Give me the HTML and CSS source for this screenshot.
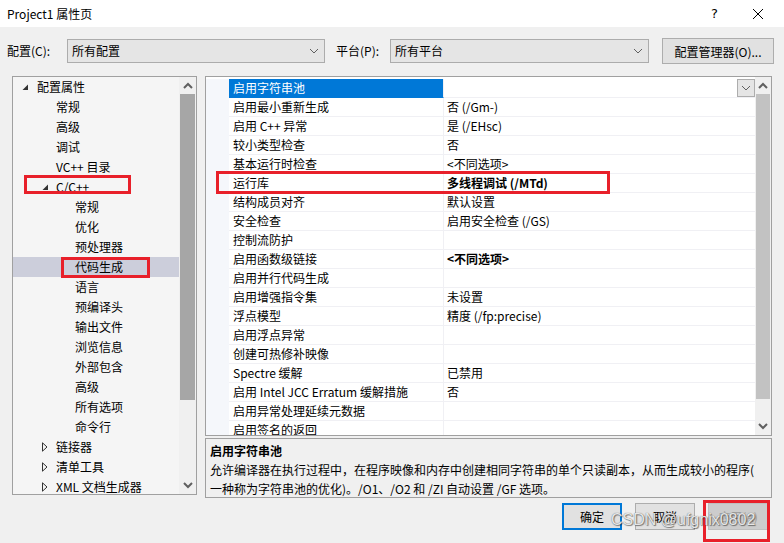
FILE: index.html
```html
<!DOCTYPE html>
<html lang="zh-CN">
<head>
<meta charset="utf-8">
<title>Project1 属性页</title>
<link rel="stylesheet" href="styles.css">
</head>
<body>
<div class="dialog">
  <div class="titlebar">
    <span class="title">Project1 属性页</span>
    <span class="help">?</span>
    <svg class="close" width="12" height="12" viewBox="0 0 12 12"><path d="M1 1 L11 11 M11 1 L1 11" stroke="#000" stroke-width="1" fill="none"/></svg>
  </div>

  <div class="toolbar">
    <span class="lbl lbl1">配置(C):</span>
    <div class="combo c1"><span>所有配置</span><svg width="10" height="6" viewBox="0 0 10 6"><path d="M1 1 L5 5 L9 1" stroke="#606060" fill="none"/></svg></div>
    <span class="lbl lbl2">平台(P):</span>
    <div class="combo c2"><span>所有平台</span><svg width="10" height="6" viewBox="0 0 10 6"><path d="M1 1 L5 5 L9 1" stroke="#606060" fill="none"/></svg></div>
    <div class="btn mgr">配置管理器(O)...</div>
  </div>

  <div class="main">
    <div class="tree">
      <div class="tree-list">
        <div class="node l0"><span class="tg"><svg width="7" height="7" viewBox="0 0 7 7"><path d="M6 0.5 L6 6 L0.5 6 Z" fill="#333"/></svg></span>配置属性</div>
        <div class="node l1">常规</div>
        <div class="node l1">高级</div>
        <div class="node l1">调试</div>
        <div class="node l1">VC++ 目录</div>
        <div class="node l1t"><span class="tg"><svg width="7" height="7" viewBox="0 0 7 7"><path d="M6 0.5 L6 6 L0.5 6 Z" fill="#333"/></svg></span>C/C++</div>
        <div class="node l2">常规</div>
        <div class="node l2">优化</div>
        <div class="node l2">预处理器</div>
        <div class="node l2 sel">代码生成</div>
        <div class="node l2">语言</div>
        <div class="node l2">预编译头</div>
        <div class="node l2">输出文件</div>
        <div class="node l2">浏览信息</div>
        <div class="node l2">外部包含</div>
        <div class="node l2">高级</div>
        <div class="node l2">所有选项</div>
        <div class="node l2">命令行</div>
        <div class="node l1t"><span class="tg"><svg width="6" height="10" viewBox="0 0 6 10"><path d="M0.5 0.8 L5 5 L0.5 9.2 Z" fill="none" stroke="#333"/></svg></span>链接器</div>
        <div class="node l1t"><span class="tg"><svg width="6" height="10" viewBox="0 0 6 10"><path d="M0.5 0.8 L5 5 L0.5 9.2 Z" fill="none" stroke="#333"/></svg></span>清单工具</div>
        <div class="node l1t"><span class="tg"><svg width="6" height="10" viewBox="0 0 6 10"><path d="M0.5 0.8 L5 5 L0.5 9.2 Z" fill="none" stroke="#333"/></svg></span>XML 文档生成器</div>
      </div>
      <div class="vscroll dark">
        <div class="arr"><svg width="10" height="7" viewBox="0 0 10 7"><path d="M1 6 L5 2 L9 6" stroke="#606060" stroke-width="2" fill="none"/></svg></div>
        <div class="thumb"></div>
        <div class="track"></div>
        <div class="arr"><svg width="10" height="7" viewBox="0 0 10 7"><path d="M1 1 L5 5 L9 1" stroke="#606060" stroke-width="2" fill="none"/></svg></div>
      </div>
    </div>

    <div class="right">
      <div class="grid">
        <div class="rows">
          <div class="row"><div class="gut"></div><div class="name selcell">启用字符串池</div><div class="val"><span></span><span class="ddbtn"><svg width="10" height="6" viewBox="0 0 10 6"><path d="M1 1 L5 5 L9 1" stroke="#606060" fill="none"/></svg></span></div></div>
          <div class="row"><div class="gut"></div><div class="name">启用最小重新生成</div><div class="val">否 (/Gm-)</div></div>
          <div class="row"><div class="gut"></div><div class="name">启用 C++ 异常</div><div class="val">是 (/EHsc)</div></div>
          <div class="row"><div class="gut"></div><div class="name">较小类型检查</div><div class="val">否</div></div>
          <div class="row"><div class="gut"></div><div class="name">基本运行时检查</div><div class="val">&lt;不同选项&gt;</div></div>
          <div class="row"><div class="gut"></div><div class="name">运行库</div><div class="val b">多线程调试 (/MTd)</div></div>
          <div class="row"><div class="gut"></div><div class="name">结构成员对齐</div><div class="val">默认设置</div></div>
          <div class="row"><div class="gut"></div><div class="name">安全检查</div><div class="val">启用安全检查 (/GS)</div></div>
          <div class="row"><div class="gut"></div><div class="name">控制流防护</div><div class="val"></div></div>
          <div class="row"><div class="gut"></div><div class="name">启用函数级链接</div><div class="val b">&lt;不同选项&gt;</div></div>
          <div class="row"><div class="gut"></div><div class="name">启用并行代码生成</div><div class="val"></div></div>
          <div class="row"><div class="gut"></div><div class="name">启用增强指令集</div><div class="val">未设置</div></div>
          <div class="row"><div class="gut"></div><div class="name">浮点模型</div><div class="val">精度 (/fp:precise)</div></div>
          <div class="row"><div class="gut"></div><div class="name">启用浮点异常</div><div class="val"></div></div>
          <div class="row"><div class="gut"></div><div class="name">创建可热修补映像</div><div class="val"></div></div>
          <div class="row"><div class="gut"></div><div class="name">Spectre 缓解</div><div class="val">已禁用</div></div>
          <div class="row"><div class="gut"></div><div class="name">启用 Intel JCC Erratum 缓解措施</div><div class="val">否</div></div>
          <div class="row"><div class="gut"></div><div class="name">启用异常处理延续元数据</div><div class="val"></div></div>
          <div class="row"><div class="gut"></div><div class="name">启用签名的返回</div><div class="val"></div></div>
        </div>
        <div class="vscroll light">
          <div class="arr"><svg width="10" height="7" viewBox="0 0 10 7"><path d="M1 6 L5 2 L9 6" stroke="#606060" stroke-width="2" fill="none"/></svg></div>
          <div class="thumb"></div>
          <div class="track"></div>
          <div class="arr"><svg width="10" height="7" viewBox="0 0 10 7"><path d="M1 1 L5 5 L9 1" stroke="#606060" stroke-width="2" fill="none"/></svg></div>
        </div>
      </div>
      <div class="desc">
        <div class="desc-title">启用字符串池</div>
        <div class="desc-line">允许编译器在执行过程中，在程序映像和内存中创建相同字符串的单个只读副本，从而生成较小的程序(</div>
        <div class="desc-line">一种称为字符串池的优化)。/O1、/O2 和 /ZI 自动设置 /GF 选项。</div>
      </div>
    </div>
  </div>

  <div class="footer">
    <div class="btn fbtn ok">确定</div>
    <div class="btn fbtn">取消</div>
    <div class="btn fbtn dis">应用(A)</div>
  </div>

  <div class="mark m-cpp"></div>
  <div class="mark m-gen"></div>
  <div class="mark m-rt"></div>
  <div class="mark m-apply"></div>
  <div class="watermark">CSDN @ufgnix0802</div>
</div>
</body>
</html>
```

FILE: styles.css
```css
* { box-sizing: border-box; }
html, body { margin: 0; padding: 0; }
body {
  width: 784px;
  height: 543px;
  overflow: hidden;
  background: #f0f0f0;
  font-family: "Noto Sans CJK SC", "Noto Sans", sans-serif;
  font-size: 12px;
  color: #000;
}
.dialog { position: relative; width: 784px; height: 543px; }

.titlebar {
  height: 27px;
  background: #fff;
  display: flex;
  align-items: center;
  padding-left: 7px;
}
.title { flex: 1; font-size: 12px; }
.help { width: 12px; margin-right: 29px; font-family: "DejaVu Sans", sans-serif; font-size: 13px; }
.close { margin-right: 20px; }

.toolbar {
  height: 49px;
  display: flex;
  align-items: flex-start;
  padding: 12px 10px 0 7px;
}
.lbl { line-height: 24px; }
.lbl1 { width: 60px; }
.lbl2 { width: 54px; margin-left: 11px; }
.combo {
  height: 24px;
  background: #e5e5e5;
  border: 1px solid #acacac;
  display: flex;
  align-items: center;
  justify-content: space-between;
  padding: 0 5px 0 4px;
}
.combo span { line-height: 22px; }
.c1 { width: 258px; }
.c2 { width: 259px; }
.btn {
  background: #e1e1e1;
  border: 1px solid #adadad;
  display: flex;
  align-items: center;
  justify-content: center;
}
.mgr { width: 112px; height: 26px; margin-left: 13px; margin-top: -1px; }

.main {
  display: flex;
  padding-left: 12px;
  gap: 8px;
  height: 421px;
}

.tree {
  width: 185px;
  height: 419px;
  border: 1px solid #a0a0a0;
  background: #f5f5f5;
  display: flex;
}
.tree-list { width: 166px; overflow: hidden; }
.node {
  height: 20px;
  line-height: 20px;
  white-space: nowrap;
  display: flex;
  align-items: center;
}
.tg { width: 16px; display: flex; align-items: center; padding-left: 1px; }
.l0 { padding-left: 8px; }
.l1 { padding-left: 43px; }
.l1t { padding-left: 27px; }
.l1t .tg { padding-left: 2px; }
.l2 { padding-left: 62px; }
.sel { background: #cccedb; }

.vscroll {
  width: 17px;
  display: flex;
  flex-direction: column;
  background: #f0f0f0;
}
.vscroll .arr { height: 17px; display: flex; align-items: center; justify-content: center; }
.vscroll .thumb { height: 306px; margin: 0 1px; }
.vscroll .track { flex: 1; }
.dark .thumb { background: #a6a6a6; }
.light .thumb { background: #c2c2c2; height: 305px; }

.right { width: 567px; display: flex; flex-direction: column; gap: 1px; }

.grid {
  height: 360px;
  border: 1px solid #a0a0a0;
  background: #fff;
  display: flex;
}
.rows { width: 549px; padding-top: 2px; overflow: hidden; }
.row {
  display: flex;
  height: 19px;
}
.gut { width: 23px; background: #f5f7fb; }
.name {
  width: 215px;
  padding-left: 4px;
  line-height: 18px;
  border-bottom: 1px solid #f0f0f4;
  border-right: 1px solid #f0f0f4;
  white-space: nowrap;
}
.selcell { background: #0078d7; color: #fff; border-bottom-color: #0078d7; }
.val {
  flex: 1;
  padding-left: 3px;
  line-height: 18px;
  border-bottom: 1px solid #f0f0f4;
  white-space: nowrap;
  display: flex;
  justify-content: space-between;
}
.val.b { font-weight: bold; }
.ddbtn {
  width: 18px;
  height: 18px;
  background: #e5e5e5;
  border: 1px solid #adadad;
  display: flex;
  align-items: center;
  justify-content: center;
}
.grid .vscroll { width: 16px; }

.desc {
  height: 60px;
  border: 1px solid #a0a0a0;
  background: #f0f0f0;
  padding: 2px 0 0 4px;
  margin-top: 1px;
}
.desc-title { font-weight: bold; line-height: 19px; }
.desc-line { line-height: 19px; white-space: nowrap; letter-spacing: 0; }

.footer {
  display: flex;
  justify-content: flex-end;
  gap: 13px;
  padding: 6px 16px 0 0;
}
.fbtn { width: 60px; height: 27px; }
.ok { border: 2px solid #0078d7; }
.dis { background: #cccccc; border-color: #bfbfbf; color: #a0a0a0; }

.mark {
  position: absolute;
  border: 3px solid #e8202a;
}
.m-cpp { left: 24px; top: 175px; width: 107px; height: 19px; }
.m-gen { left: 61px; top: 257px; width: 89px; height: 21px; }
.m-rt { left: 216px; top: 171px; width: 394px; height: 23px; }
.m-apply { left: 703px; top: 500px; width: 67px; height: 42px; }

.watermark {
  position: absolute;
  left: 611px;
  top: 511px;
  font-family: "Liberation Sans", sans-serif;
  font-size: 16px;
  color: rgba(255, 255, 255, 0.85);
  text-shadow: 0 0 1px #555, 1px 1px 1px rgba(0, 0, 0, 0.45);
  white-space: nowrap;
}
```
